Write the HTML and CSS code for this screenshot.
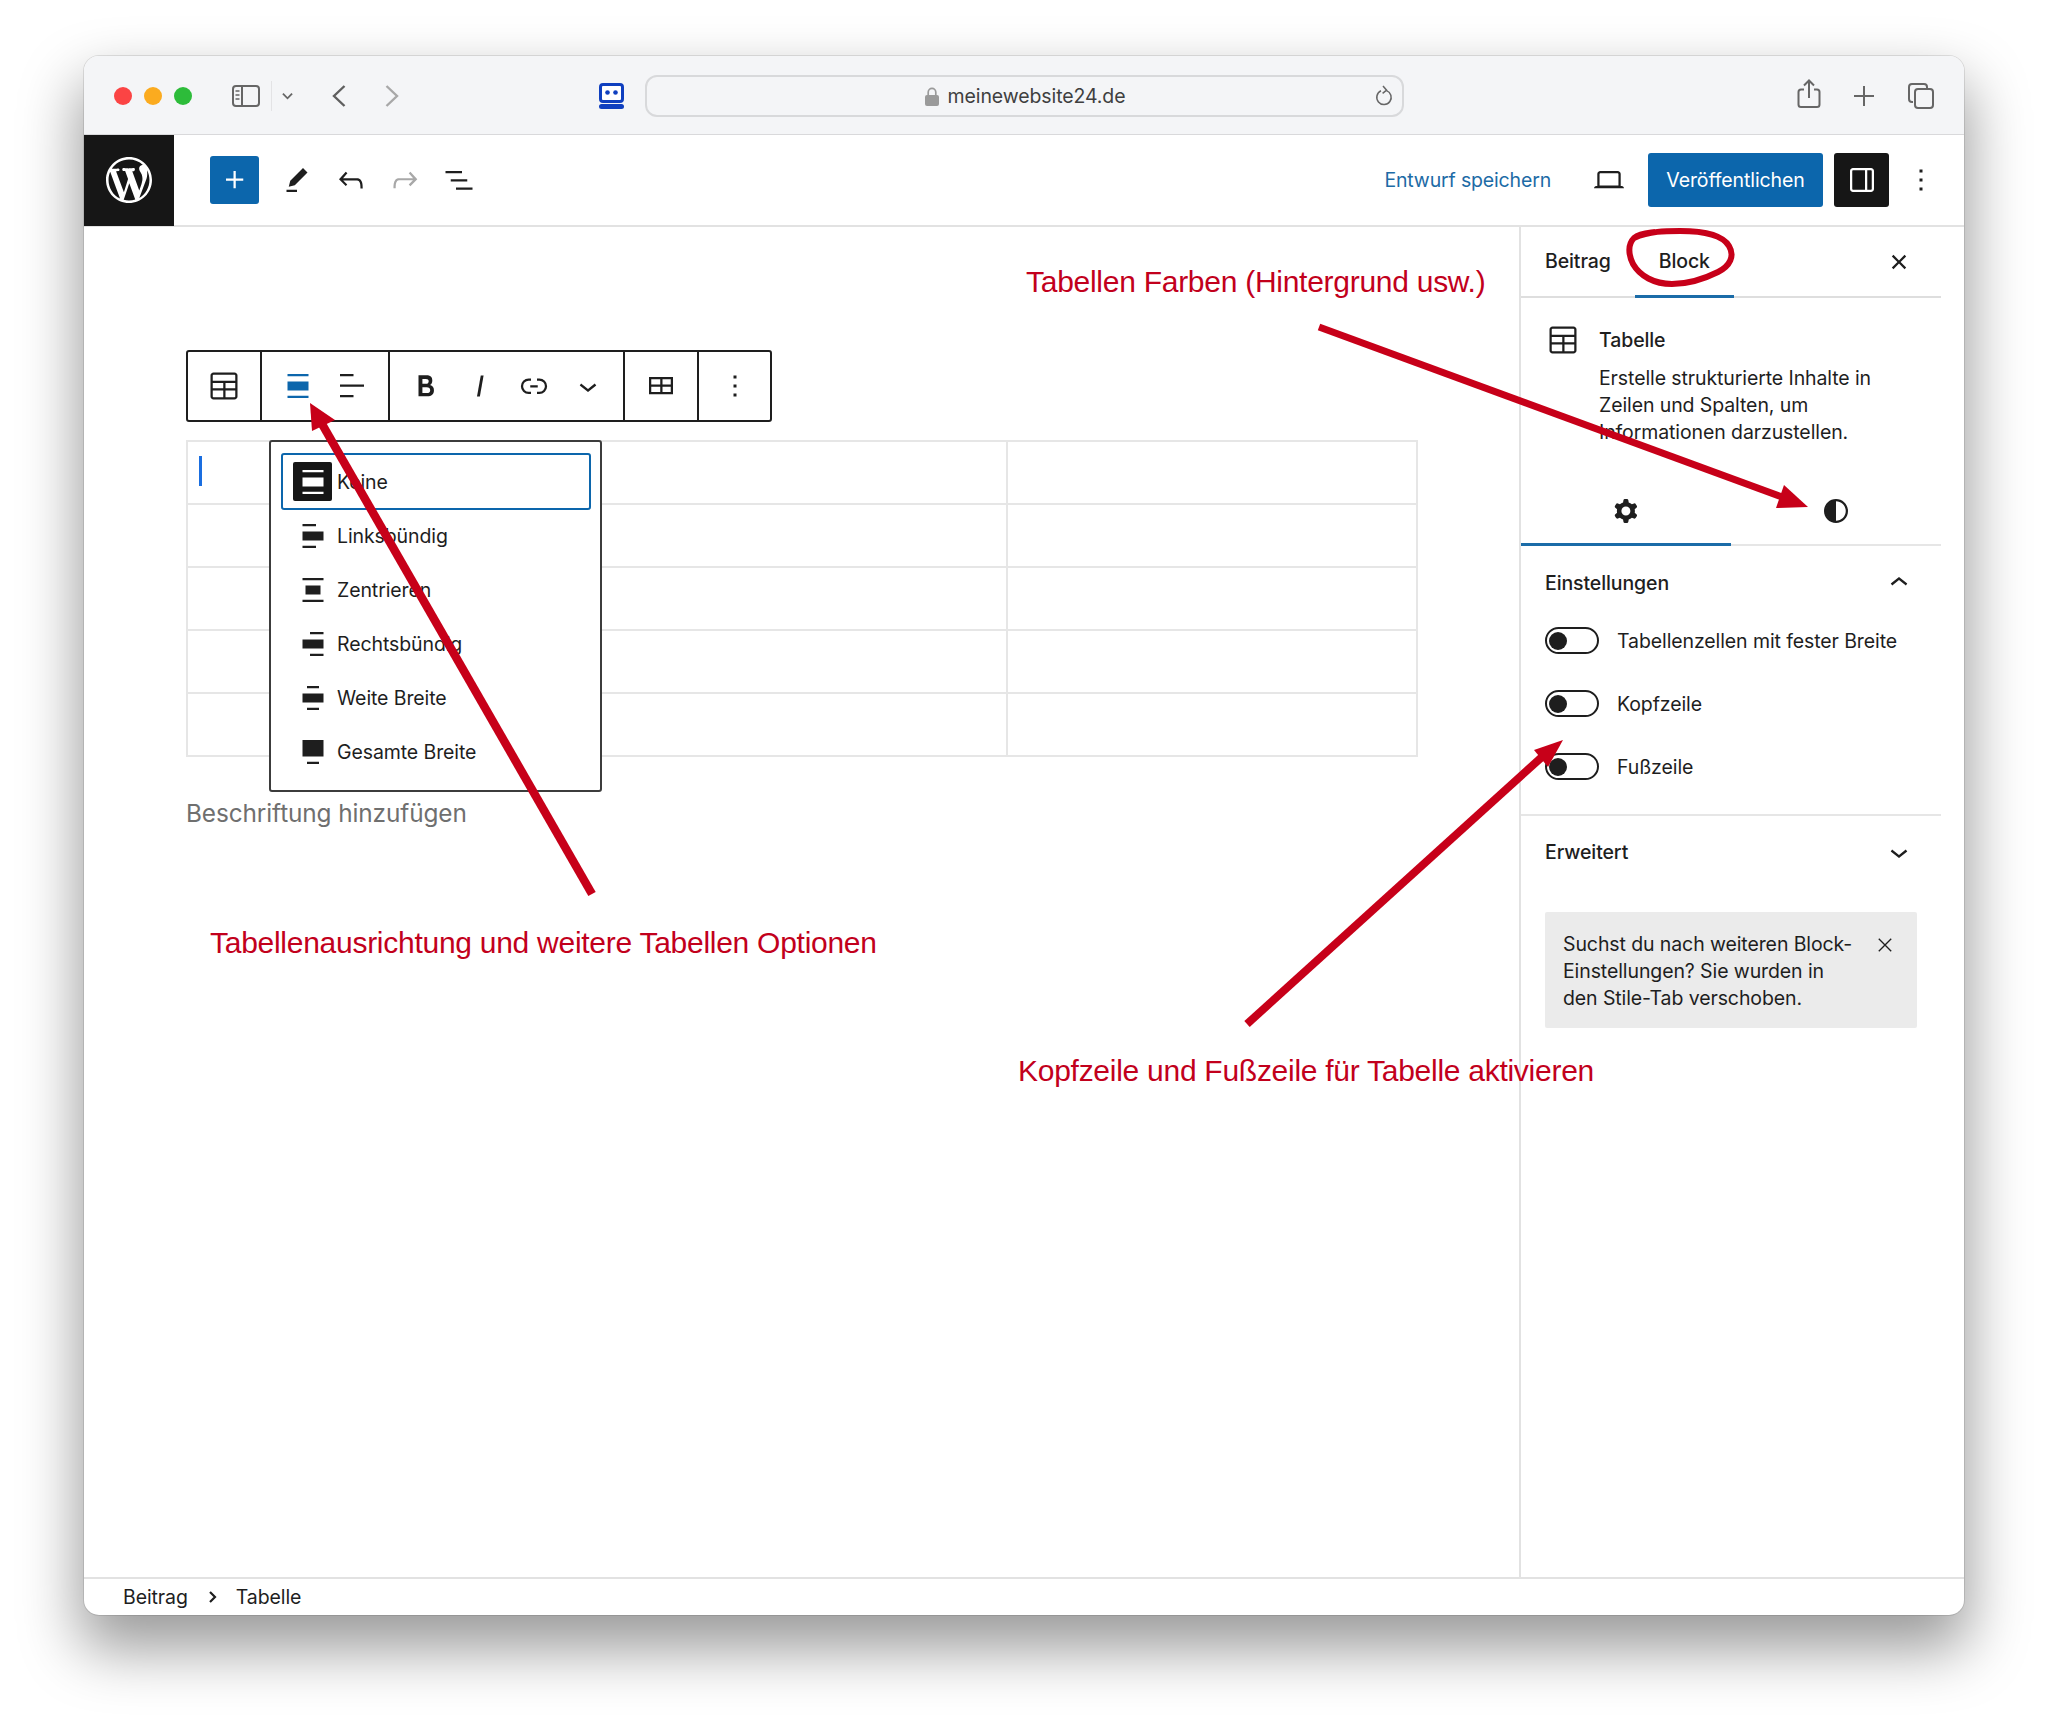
FILE: index.html
```html
<!DOCTYPE html>
<html lang="de">
<head>
<meta charset="utf-8">
<title>Tabelle</title>
<link rel="stylesheet" href="styles.css">
</head>
<body>
<div class="window">
  <div class="safari">
    <div class="lights"><span class="light red"></span><span class="light amber"></span><span class="light green"></span></div>
    <svg class="s-side" viewBox="0 0 28 22" fill="none" stroke="#666" stroke-width="2"><rect x="1" y="1" width="26" height="20" rx="3"/><path d="M10 1v20"/><path d="M3.5 6H7.5M3.5 10H7.5M3.5 14H7.5" stroke-width="1.6"/></svg>
    <span class="s-sep"></span>
    <svg class="s-drop" viewBox="0 0 12 8" fill="none" stroke="#666" stroke-width="2"><path d="M1 1.5 6 6.5 11 1.5"/></svg>
    <svg class="s-back" viewBox="0 0 14 24" fill="none" stroke="#5f5f5f" stroke-width="2.4"><path d="M12.5 2 2 12 12.5 22"/></svg>
    <svg class="s-fwd" viewBox="0 0 14 24" fill="none" stroke="#a8a8a8" stroke-width="2.4"><path d="M1.5 2 12 12 1.5 22"/></svg>
    <svg class="s-pm" viewBox="0 0 25 26"><rect x="1.5" y="1.5" width="22" height="17" rx="2.5" fill="#fff" stroke="#0f3fbf" stroke-width="3"/><circle cx="8.5" cy="9.5" r="2.3" fill="#0f3fbf"/><circle cx="16.5" cy="9.5" r="2.3" fill="#0f3fbf"/><rect y="21" width="25" height="5" rx="2.5" fill="#0f3fbf"/></svg>
    <div class="url">
      <div class="url-mid">
        <svg class="lock" viewBox="0 0 14 19" fill="none"><path d="M3.2 9V5.2a3.8 3.8 0 0 1 7.6 0V9" stroke="#9a9a9a" stroke-width="1.7"/><rect y="8" width="14" height="11" rx="2" fill="#9a9a9a"/></svg>
        <span class="url-text">meinewebsite24.de</span>
      </div>
      <svg class="reload" viewBox="0 0 18 22" fill="none" stroke="#666" stroke-width="1.5"><path d="M11.5 5.600a7.200 7.200 0 1 1-5.500 .2"/><path d="M8 1l3.600 4.200L7.600 8.400"/></svg>
    </div>
    <svg class="s-share" viewBox="0 0 24 29" fill="none" stroke="#666" stroke-width="2"><path d="M7 10.500H4a2.500 2.500 0 0 0-2.500 2.500v12.500A2.500 2.500 0 0 0 4 28h16a2.500 2.500 0 0 0 2.500-2.500V13a2.500 2.500 0 0 0-2.500-2.500h-3"/><path d="M12 19V2M7 6.500 12 1.500l5 5"/></svg>
    <svg class="s-plus" viewBox="0 0 22 22" fill="none" stroke="#666" stroke-width="2"><path d="M11 1v20M1 11h20"/></svg>
    <svg class="s-tabs" viewBox="0 0 26 26" fill="none" stroke="#666" stroke-width="2"><path d="M5 19H4a3 3 0 0 1-3-3V4a3 3 0 0 1 3-3h12a3 3 0 0 1 3 3v1"/><rect x="7" y="6" width="18" height="19" rx="3"/></svg>
  </div>

  <header class="editbar">
    <div class="wp"><svg class="wp-logo" viewBox="0 0 20 20"><path fill="#fff" d="M20 10c0-5.510-4.490-10-10-10C4.480 0 0 4.490 0 10c0 5.520 4.480 10 10 10 5.510 0 10-4.480 10-10zM7.780 15.370L4.370 6.220c.550-.020 1.170-.080 1.170-.080.500-.060.440-1.130-.060-1.110 0 0-1.450.110-2.370.110-.180 0-.370 0-.580-.010C4.120 2.690 6.870 1.110 10 1.110c2.330 0 4.450.870 6.050 2.340-.680-.110-1.650.390-1.650 1.580 0 .740.450 1.360.900 2.100.350.610.550 1.360.550 2.460 0 1.490-1.400 5-1.400 5l-3.030-8.370c.540-.020.820-.170.820-.170.500-.050.440-1.250-.060-1.220 0 0-1.440.120-2.380.120-.870 0-2.330-.120-2.330-.120-.500-.030-.560 1.200-.060 1.220l.920.080 1.260 3.410zM17.410 10c.240-.640.740-1.870.430-4.250.700 1.290 1.050 2.710 1.050 4.250 0 3.290-1.730 6.240-4.400 7.780.970-2.590 1.940-5.200 2.920-7.780zM6.100 18.090C3.120 16.650 1.110 13.530 1.110 10c0-1.300.230-2.480.720-3.590C3.250 10.300 4.670 14.200 6.100 18.090zm4.030-6.630l2.580 6.980c-.860.290-1.760.450-2.710.450-.790 0-1.570-.110-2.290-.330.810-2.380 1.620-4.740 2.420-7.100z"/></svg></div>
    <button class="add"><svg class="ic" viewBox="0 0 24 24"><path fill="#fff" d="M11 12.500V17.500H12.500V12.500H17.500V11H12.500V6H11V11H6V12.500H11Z"/></svg></button>
    <div class="edit-tools">
      <svg class="ic" viewBox="0 0 24 24"><path d="m19 7-3-3-8.500 8.500-1 4 4-1L19 7Zm-7 11.500H5V20h7v-1.500Z"/></svg>
      <svg class="ic" viewBox="0 0 24 24"><path d="M18.300 11.700c-.6-.6-1.400-.9-2.300-.9H6.700l2.900-3.300-1.100-1-4.500 5L8.500 16l1-1-2.700-2.700H16c.5 0 .9.2 1.300.5 1 1 1 3.400 1 4.500v.3h1.500v-.2c0-1.500 0-4.300-1.500-5.700z"/></svg>
      <svg class="ic dim" viewBox="0 0 24 24"><path d="M15.600 6.500l-1.100 1 2.900 3.300H8c-.9 0-1.700.3-2.300.9-1.400 1.500-1.400 4.200-1.400 5.600v.2h1.500v-.3c0-1.100 0-3.500 1-4.500.3-.3.7-.5 1.300-.5h9.200L14.500 15l1.100 1.100 4.600-4.600-4.600-5z"/></svg>
      <svg class="ic" viewBox="0 0 24 24"><path d="M3 6h11v1.500H3V6Zm3.500 5.500h11V13h-11v-1.500ZM21 17H10v1.500h11V17Z"/></svg>
    </div>
    <div class="edit-right">
      <span class="save">Entwurf speichern</span>
      <svg class="ic laptop" viewBox="0 0 24 24"><path d="M20.500 16h-.7V8c0-1.100-.9-2-2-2H6.200c-1.100 0-2 .9-2 2v8h-.7c-.8 0-1.500.7-1.500 1.500h20c0-.8-.7-1.500-1.500-1.500zM5.700 8c0-.3.2-.5.5-.5h11.600c.3 0 .5.2.5.5v7.600H5.700V8z"/></svg>
      <button class="publish">Veröffentlichen</button>
      <button class="side-toggle"><svg class="ic" viewBox="0 0 24 24"><path fill="#fff" d="M18 4H6c-1.100 0-2 .9-2 2v12c0 1.100.9 2 2 2h12c1.100 0 2-.9 2-2V6c0-1.100-.9-2-2-2zm-4 14.500H6c-.3 0-.5-.2-.5-.5V6c0-.3.2-.5.5-.5h8v13zm4.500-.5c0 .3-.2.5-.5.5h-2.500v-13H18c.3 0 .5.2.5.5v12z"/></svg></button>
      <svg class="ic more" viewBox="0 0 24 24"><path d="M13 19h-2v-2h2v2zm0-6h-2v-2h2v2zm0-6h-2V5h2v2z"/></svg>
    </div>
  </header>

  <div class="main">
    <main class="canvas">
      <div class="blocktools">
        <div class="bgroup"><span class="bbtn"><svg class="ic" viewBox="0 0 24 24"><path d="M19 3H5c-1.100 0-2 .9-2 2v14c0 1.100.9 2 2 2h14c1.100 0 2-.9 2-2V5c0-1.100-.9-2-2-2zM5 4.500h14c.3 0 .5.2.5.5v3.500h-15V5c0-.3.2-.5.5-.5zm8 5.500h6.500v3.500H13V10zm-1.500 3.500h-7V10h7v3.500zm-7 5.500v-4h7v4.500H5c-.3 0-.5-.2-.5-.5zm14.500.5h-6V15h6.500v4c0 .3-.2.5-.5.5z"/></svg></span></div>
        <div class="bgroup">
          <span class="bbtn"><svg class="ic blue" viewBox="0 0 24 24"><path d="M19 5.500H5V4h14v1.500ZM19 20H5v-1.500h14V20ZM5 9h14v6H5V9Z"/></svg></span>
          <span class="bbtn"><svg class="ic" viewBox="0 0 24 24"><path d="M13 5.500H4V4h9v1.500Zm7 7H4V11h16v1.500Zm-7 7H4V18h9v1.500Z"/></svg></span>
        </div>
        <div class="bgroup wide">
          <span class="bbtn"><svg class="ic" viewBox="0 0 24 24"><path d="M14.700 11.300c1-.6 1.500-1.600 1.500-3 0-2.300-1.300-3.400-4-3.400H7v14h5.800c1.400 0 2.500-.3 3.300-1 .8-.7 1.200-1.700 1.200-2.900.1-1.900-.8-3.100-2.600-3.700zm-5.100-4h2.300c.6 0 1.100.1 1.400.4.3.3.5.7.5 1.200s-.2 1-.5 1.200c-.3.3-.8.4-1.400.4H9.600V7.300zm4.600 9c-.4.3-1 .4-1.700.4H9.600v-3.900h2.900c.7 0 1.300.2 1.700.5.4.3.6.8.6 1.500s-.2 1.200-.6 1.500z"/></svg></span>
          <span class="bbtn"><svg class="ic" viewBox="0 0 24 24"><path d="M12.500 5L10 19h1.900l2.500-14z"/></svg></span>
          <span class="bbtn"><svg class="ic" viewBox="0 0 24 24"><path d="M10 17.389H8.444A5.194 5.194 0 1 1 8.444 7H10v1.500H8.444a3.694 3.694 0 0 0 0 7.389H10v1.500ZM14 7h1.556a5.194 5.194 0 0 1 0 10.390H14v-1.500h1.556a3.694 3.694 0 0 0 0-7.390H14V7Zm-4.500 6h5v-1.500h-5V13Z"/></svg></span>
          <span class="bbtn"><svg class="ic" viewBox="0 0 24 24"><path d="M17.500 11.600L12 16l-5.500-4.400.9-1.200L12 14l4.500-3.600 1 1.200z"/></svg></span>
        </div>
        <div class="bgroup"><span class="bbtn"><svg class="ic" viewBox="0 0 24 24"><path d="M4 6v11.500h16V6H4zm1.500 1.500h6V11h-6V7.500zm0 8.500v-3.500h6V16h-6zm13 0H13v-3.500h5.500V16zM13 11V7.500h5.500V11H13z"/></svg></span></div>
        <div class="bgroup last"><span class="bbtn"><svg class="ic" viewBox="0 0 24 24"><path d="M13 19h-2v-2h2v2zm0-6h-2v-2h2v2zm0-6h-2V5h2v2z"/></svg></span></div>
      </div>

      <div class="table-wrap">
        <table class="tbl">
          <tr><td class="c1"><span class="caret"></span></td><td></td></tr>
          <tr><td class="c1"></td><td></td></tr>
          <tr><td class="c1"></td><td></td></tr>
          <tr><td class="c1"></td><td></td></tr>
          <tr><td class="c1"></td><td></td></tr>
        </table>
        <div class="menu">
          <div class="mitem active"><span class="micon black"><svg class="ic" viewBox="0 0 24 24"><path fill="#fff" d="M19 5.500H5V4h14v1.500ZM19 20H5v-1.500h14V20ZM5 9h14v6H5V9Z"/></svg></span>Keine</div>
          <div class="mitem"><span class="micon"><svg class="ic" viewBox="0 0 24 24"><path d="M5 4h9v1.500H5zM5 9h14v6H5zM5 18.500h9V20H5z"/></svg></span>Linksbündig</div>
          <div class="mitem"><span class="micon"><svg class="ic" viewBox="0 0 24 24"><path d="M5 4h14v1.500H5zM7 9h10v6H7zM5 18.500h14V20H5z"/></svg></span>Zentrieren</div>
          <div class="mitem"><span class="micon"><svg class="ic" viewBox="0 0 24 24"><path d="M10 4h9v1.500h-9zM5 9h14v6H5zM10 18.500h9V20h-9z"/></svg></span>Rechtsbündig</div>
          <div class="mitem"><span class="micon"><svg class="ic" viewBox="0 0 24 24"><path d="M8 4h8v1.500H8zM5 9h14v6H5zM8 18.500h8V20H8z"/></svg></span>Weite Breite</div>
          <div class="mitem"><span class="micon"><svg class="ic" viewBox="0 0 24 24"><path d="M5 4h14v11H5zM8 18.500h8V20H8z"/></svg></span>Gesamte Breite</div>
        </div>
      </div>
      <p class="caption">Beschriftung hinzufügen</p>
    </main>

    <aside class="sidebar">
      <div class="stabs">
        <span class="stab">Beitrag</span>
        <span class="stab on">Block</span>
        <svg class="ic sclose" viewBox="0 0 24 24"><path d="M12 13.060l3.712 3.713 1.061-1.060L13.061 12l3.713-3.712-1.060-1.061L12 10.939 8.288 7.227l-1.061 1.060L10.939 12l-3.712 3.712 1.060 1.061L12 13.061z"/></svg>
      </div>
      <div class="card">
        <svg class="ic" viewBox="0 0 24 24"><path d="M19 3H5c-1.100 0-2 .9-2 2v14c0 1.100.9 2 2 2h14c1.100 0 2-.9 2-2V5c0-1.100-.9-2-2-2zM5 4.500h14c.3 0 .5.2.5.5v3.500h-15V5c0-.3.2-.5.5-.5zm8 5.500h6.500v3.500H13V10zm-1.500 3.500h-7V10h7v3.500zm-7 5.500v-4h7v4.500H5c-.3 0-.5-.2-.5-.5zm14.500.5h-6V15h6.500v4c0 .3-.2.5-.5.5z"/></svg>
        <div class="card-body">
          <div class="card-title">Tabelle</div>
          <div class="card-desc">Erstelle strukturierte Inhalte in Zeilen und Spalten, um Informationen darzustellen.</div>
        </div>
      </div>
      <div class="itabs">
        <span class="itab on"><svg class="ic" viewBox="0 0 24 24"><path fill-rule="evenodd" clip-rule="evenodd" d="M10.289 4.836A1 1 0 0 1 11.275 4h1.306a1 1 0 0 1 .987.836l.244 1.466c.787.26 1.503.679 2.108 1.218l1.393-.522a1 1 0 0 1 1.216.437l.653 1.130a1 1 0 0 1-.23 1.273l-1.148.944a6.025 6.025 0 0 1 0 2.435l1.149.946a1 1 0 0 1 .23 1.272l-.653 1.130a1 1 0 0 1-1.216.437l-1.394-.522c-.605.54-1.320.958-2.108 1.218l-.244 1.466a1 1 0 0 1-.987.836h-1.306a1 1 0 0 1-.986-.836l-.244-1.466a5.995 5.995 0 0 1-2.108-1.218l-1.394.522a1 1 0 0 1-1.217-.436l-.653-1.131a1 1 0 0 1 .23-1.272l1.149-.946a6.026 6.026 0 0 1 0-2.435l-1.148-.944a1 1 0 0 1-.23-1.272l.653-1.131a1 1 0 0 1 1.217-.437l1.393.522a5.994 5.994 0 0 1 2.108-1.218l.244-1.466ZM14.929 12a3 3 0 1 1-6 0 3 3 0 0 1 6 0Z"/></svg></span>
        <span class="itab"><svg class="ic" viewBox="0 0 24 24"><path d="M12 4c-4.400 0-8 3.600-8 8s3.600 8 8 8 8-3.600 8-8-3.600-8-8-8zm0 14.500c-3.600 0-6.500-2.900-6.500-6.500S8.400 5.500 12 5.500s6.500 2.900 6.500 6.500-2.900 6.500-6.500 6.500z"/><path d="M12 5v14a7 7 0 0 1 0-14z"/></svg></span>
      </div>
      <section class="panel">
        <div class="phead"><span>Einstellungen</span><svg class="ic" viewBox="0 0 24 24"><path d="M6.500 12.400L12 8l5.500 4.400-.9 1.200L12 10l-4.500 3.600-1-1.200z"/></svg></div>
        <div class="trow"><span class="toggle"><i class="knob"></i></span>Tabellenzellen mit fester Breite</div>
        <div class="trow"><span class="toggle"><i class="knob"></i></span>Kopfzeile</div>
        <div class="trow"><span class="toggle"><i class="knob"></i></span>Fußzeile</div>
      </section>
      <section class="panel2">
        <div class="phead"><span>Erweitert</span><svg class="ic" viewBox="0 0 24 24"><path d="M17.500 11.600L12 16l-5.500-4.400.9-1.200L12 14l4.500-3.600 1 1.200z"/></svg></div>
        <div class="notice">
          <p>Suchst du nach weiteren Block-Einstellungen? Sie wurden in den Stile-Tab verschoben.</p>
          <svg class="nclose" viewBox="0 0 18 18" fill="none" stroke="#1e1e1e" stroke-width="1.500"><path d="M2 2l14 14M16 2 2 16"/></svg>
        </div>
      </section>
    </aside>
  </div>

  <footer class="crumbs">
    <span>Beitrag</span>
    <svg class="crumb-sep" viewBox="0 0 10 14" fill="none" stroke="#1e1e1e" stroke-width="2.200"><path d="M2 2l5 5-5 5"/></svg>
    <span>Tabelle</span>
  </footer>

  <div class="note n1">Tabellen Farben (Hintergrund usw.)</div>
  <div class="note n2">Tabellenausrichtung und weitere Tabellen Optionen</div>
  <div class="note n3">Kopfzeile und Fußzeile für Tabelle aktivieren</div>

  <svg class="marks" viewBox="84 56 1880 1559" fill="none">
    <path d="M1319 327 1782 497" stroke="#c70019" stroke-width="7"/>
    <polygon points="1808,507 1776,508 1784,485" fill="#c70019"/>
    <path d="M592 894 322 424" stroke="#c70019" stroke-width="8.500"/>
    <polygon points="310,403 335,420 312,431" fill="#c70019"/>
    <path d="M1247 1024 1543 756" stroke="#c70019" stroke-width="8"/>
    <polygon points="1563,740 1534,750 1548,767" fill="#c70019"/>
    <path d="M1634 238C1650 231 1665 231 1680 231 1700 231 1722 234 1729 246 1735 256 1730 266 1718 272 1702 280 1688 284 1672 284 1654 284 1640 276 1633 264 1628 254 1628 244 1634 238 1640 233 1648 233 1655 232" stroke="#c70019" stroke-width="6"/>
  </svg>
</div>
</body>
</html>
```

FILE: styles.css
```css
* { box-sizing: border-box; }
html, body { margin: 0; background: #fff; }
body {
  padding: 56px 84px 111px;
  font-family: "Inter", "Liberation Sans", sans-serif;
  font-size: 19.5px;
  letter-spacing: -0.1px;
  color: #1e1e1e;
}
.window {
  position: relative;
  width: 1880px;
  height: 1559px;
  display: flex;
  flex-direction: column;
  background: #fff;
  border-radius: 15px;
  box-shadow: 0 30px 60px 4px rgba(0,0,0,.4), 0 0 0 1px rgba(0,0,0,.1);
}
svg { display: block; flex: none; }
.ic { width: 36px; height: 36px; fill: #1e1e1e; }
.ic.dim { fill: #a8a8a8; }
.ic.blue { fill: #0c66ac; }
button { border: 0; padding: 0; font: inherit; letter-spacing: inherit; cursor: default; }

/* Safari bar */
.safari {
  height: 79px;
  flex: none;
  display: flex;
  align-items: center;
  padding-top: 2px;
  background: #f4f5f7;
  border-bottom: 1px solid #d9d9db;
  border-radius: 15px 15px 0 0;
}
.lights { display: flex; gap: 12px; margin-left: 30px; }
.light { width: 18px; height: 18px; border-radius: 50%; }
.red { background: #fb4444; }
.amber { background: #fbab1f; }
.green { background: #2dbc3a; }
.s-side { width: 28px; height: 22px; margin-left: 40px; }
.s-sep { width: 1px; height: 30px; background: #e3e3e5; margin-left: 11px; }
.s-drop { width: 11px; height: 8px; margin-left: 10px; }
.s-back { width: 14px; height: 24px; margin-left: 39px; }
.s-fwd { width: 14px; height: 24px; margin-left: 39px; }
.s-pm { width: 25px; height: 26px; margin-left: 200px; }
.url {
  width: 759px;
  height: 42px;
  margin-left: 21px;
  display: flex;
  align-items: center;
  border: 2px solid #d8d9db;
  border-radius: 12px;
  padding-right: 9px;
}
.url-mid { flex: 1; display: flex; align-items: center; justify-content: center; gap: 9px; padding-left: 28px; }
.lock { width: 14px; height: 19px; }
.url-text { color: #3f3f3f; }
.reload { width: 18px; height: 22px; }
.s-share { width: 24px; height: 29px; margin-left: 393px; margin-top: -6px; }
.s-plus { width: 22px; height: 22px; margin-left: 32px; }
.s-tabs { width: 26px; height: 26px; margin-left: 33px; }

/* Editor header */
.editbar {
  height: 92px;
  flex: none;
  display: flex;
  align-items: center;
  border-bottom: 2px solid #e2e2e2;
}
.wp {
  width: 90px;
  height: 91px;
  display: flex;
  align-items: center;
  justify-content: center;
  background: #161616;
}
.wp-logo { width: 46px; height: 46px; }
.add {
  width: 49px;
  height: 48px;
  margin-left: 36px;
  display: flex;
  align-items: center;
  justify-content: center;
  background: #0c66ac;
  border-radius: 3px;
}
.edit-tools { display: flex; gap: 18px; margin-left: 20px; }
.edit-right { margin-left: auto; display: flex; align-items: center; }
.save { color: #1d6ba6; letter-spacing: -0.16px; }
.laptop { margin-left: 40px; }
.publish {
  width: 175px;
  height: 54px;
  margin-left: 21px;
  background: #0c66ac;
  color: #fff;
  border-radius: 3px;
}
.side-toggle {
  width: 55px;
  height: 54px;
  margin-left: 11px;
  display: flex;
  align-items: center;
  justify-content: center;
  background: #161616;
  border-radius: 3px;
}
.more { margin: 0 25px 0 14px; }

/* Main */
.main { flex: 1; min-height: 0; display: flex; }
.canvas { flex: 1; min-width: 0; padding: 123px 0 0 102px; }
.blocktools {
  display: flex;
  width: 586px;
  height: 72px;
  border: 2px solid #1e1e1e;
  border-radius: 3px;
  background: #fff;
}
.bgroup {
  display: flex;
  align-items: center;
  padding: 0 9px;
  border-right: 2px solid #1e1e1e;
}
.bgroup.wide { padding: 0 8.500px; }
.bgroup.last { border-right: 0; flex: 1; }
.bbtn { width: 54px; display: flex; justify-content: center; }

.table-wrap { position: relative; margin-top: 18px; width: 1232px; }
.tbl { width: 100%; border-collapse: collapse; table-layout: fixed; }
.tbl td { height: 63px; border: 2px solid #e6e6e6; padding: 0 11px; vertical-align: top; }
.tbl .c1 { width: 820px; }
.caret { display: block; width: 3px; height: 30px; margin-top: 14px; background: #1a6ee0; }
.menu {
  position: absolute;
  left: 83px;
  top: 0;
  width: 333px;
  height: 352px;
  padding: 11px 9px 0 10px;
  background: #fff;
  border: 2px solid #3c3c3c;
  border-radius: 3px;
}
.mitem { display: flex; align-items: center; gap: 5px; height: 54px; padding-left: 12px; }
.mitem.active {
  height: 57px;
  margin-bottom: -1px;
  border: 2px solid #0c66ac;
  border-radius: 3px;
  padding-left: 10px;
}
.micon { width: 39px; height: 39px; display: flex; align-items: center; justify-content: center; }
.micon.black { background: #161616; border-radius: 2px; }
.caption { margin: 38px 0 0; font-size: 24.375px; line-height: 36px; color: #6f6f6f; }

/* Sidebar */
.sidebar { width: 445px; flex: none; border-left: 2px solid #e2e2e2; padding-right: 23px; }
.stabs {
  height: 71px;
  display: flex;
  align-items: center;
  border-bottom: 2px solid #dedede;
}
.stab {
  height: 71px;
  padding: 0 24px;
  margin-bottom: -2px;
  display: flex;
  align-items: center;
  font-weight: 500;
  border-bottom: 3px solid transparent;
}
.stab.on { border-bottom-color: #1b6ca8; }
.sclose { margin-left: auto; margin-right: 24px; }
.card { display: flex; gap: 18px; padding: 24px 24px 0; height: 177px; }
.card-title { font-weight: 500; line-height: 27px; margin-top: 4.500px; }
.card-desc { margin-top: 11px; line-height: 27px; width: 325px; }
.itabs { display: flex; height: 71px; border-bottom: 2px solid #e6e6e6; }
.itab {
  flex: 1;
  margin-bottom: -2px;
  display: flex;
  align-items: center;
  justify-content: center;
  padding-top: 4px;
  border-bottom: 3px solid transparent;
}
.itab.on { border-bottom-color: #1b6ca8; }
.panel { height: 270px; padding: 19px 24px 0; border-bottom: 2px solid #e6e6e6; }
.panel2 { padding: 18px 24px 0; }
.phead { display: flex; align-items: center; justify-content: space-between; height: 36px; font-weight: 500; }
.trow { display: flex; align-items: center; gap: 18px; height: 27px; margin-top: 36px; }
.phead + .trow { margin-top: 26px; }
.toggle {
  width: 54px;
  height: 27px;
  flex: none;
  display: flex;
  align-items: center;
  padding-left: 2px;
  border: 2px solid #1e1e1e;
  border-radius: 14px;
}
.knob { width: 18px; height: 18px; border-radius: 50%; background: #1e1e1e; }
.notice {
  display: flex;
  width: 372px;
  height: 116px;
  margin-top: 42px;
  padding: 19px 18px 0;
  background: #ebebeb;
  border-radius: 2px;
}
.notice p { margin: 0; line-height: 27px; width: 296px; }
.nclose { width: 16px; height: 16px; margin: 6px 0 0 18px; }

/* Footer */
.crumbs {
  height: 38px;
  flex: none;
  display: flex;
  align-items: center;
  padding-left: 39px;
  border-top: 2px solid #e2e2e2;
}
.crumb-sep { width: 10px; height: 14px; margin: 0 18px 0 20px; }

/* Annotations */
.note {
  position: absolute;
  font-family: "Liberation Sans", Arial, sans-serif;
  font-size: 30px;
  letter-spacing: -0.27px;
  line-height: 36px;
  color: #c2001c;
  white-space: nowrap;
}
.n1 { left: 942px; top: 208px; }
.n2 { left: 126px; top: 869px; }
.n3 { left: 934px; top: 997px; }
.marks { position: absolute; left: 0; top: 0; width: 1880px; height: 1559px; pointer-events: none; }
```
